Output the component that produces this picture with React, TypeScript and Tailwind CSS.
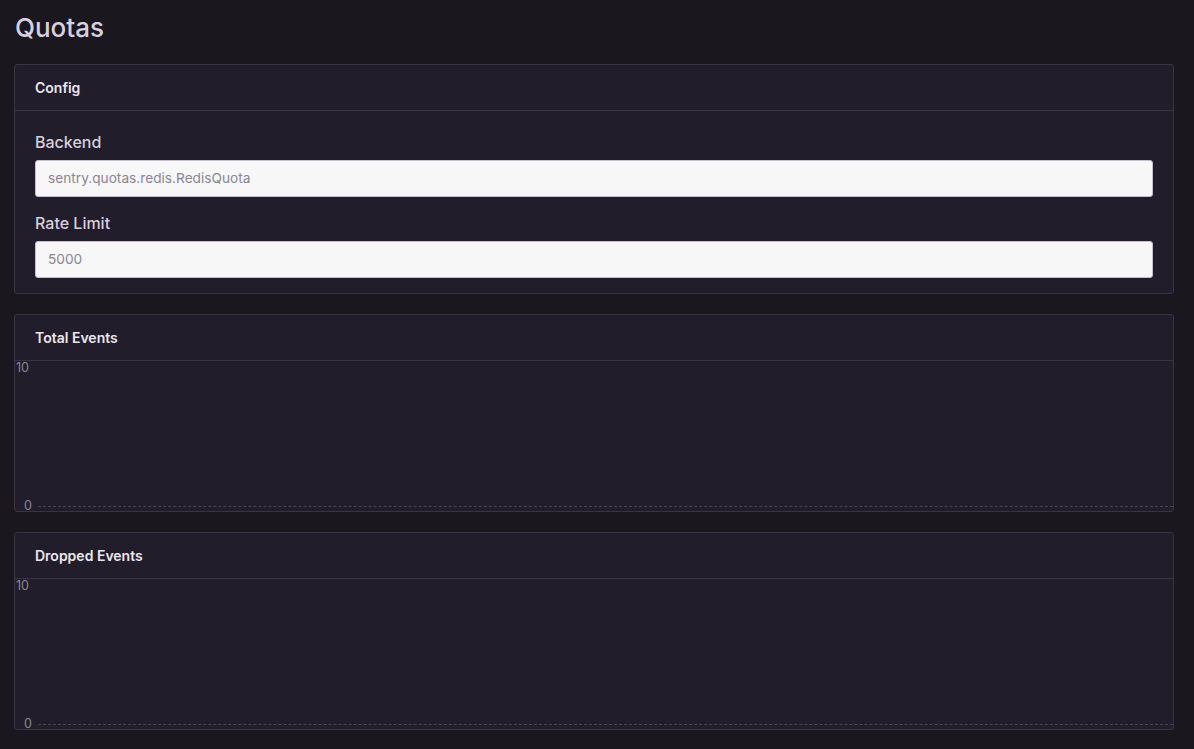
const font = { fontFamily: 'Inter, "Noto Sans", sans-serif' };

function Panel({ title, children }: { title: string; children: React.ReactNode }) {
    return (
        <div className="rounded-[3px] border border-[#3a3245] bg-[#221d2a]">
            <div className="flex h-[46px] items-center border-b border-[#3a3245] px-5 text-[14px] font-semibold text-[#ebe6ef]">
                {title}
            </div>
            {children}
        </div>
    );
}

function Field({ label, value }: { label: string; value: string }) {
    return (
        <div>
            <div className="mb-2 text-[16px] font-medium leading-5 text-[#d6d0dc]">{label}</div>
            <div className="flex h-[37px] items-center rounded-[3px] border border-[#c6becf] bg-[#f7f7f8] px-3 text-[13.7px] text-[#8b8593]">
                {value}
            </div>
        </div>
    );
}

function Chart() {
    return (
        <div className="flex h-[150px] flex-col justify-between">
            <div className="pl-[1px] pt-[1px] text-[12.5px] leading-3 text-[#8e849a]">10</div>
            <div className="-mb-[1px] flex items-center gap-[6px] pl-[9px]">
                <span className="text-[12.5px] leading-3 text-[#8e849a]">0</span>
                <div className="flex-1 border-t border-dashed border-[#4a4256]" />
            </div>
        </div>
    );
}

export default function App() {
    return (
        <div style={font} className="min-h-screen bg-[#1b171f] pl-[14px] pr-[20px] pb-5">
            <h1 className="flex h-[54px] items-center pl-[1px] text-[26px] font-medium text-[#d8d0e0]">Quotas</h1>
            <div className="mt-[10px] space-y-5">
                <Panel title="Config">
                    <div className="space-y-4 px-5 pb-[15px] pt-[21px]">
                        <Field label="Backend" value="sentry.quotas.redis.RedisQuota" />
                        <Field label="Rate Limit" value="5000" />
                    </div>
                </Panel>
                <Panel title="Total Events">
                    <Chart />
                </Panel>
                <Panel title="Dropped Events">
                    <Chart />
                </Panel>
            </div>
        </div>
    );
}
